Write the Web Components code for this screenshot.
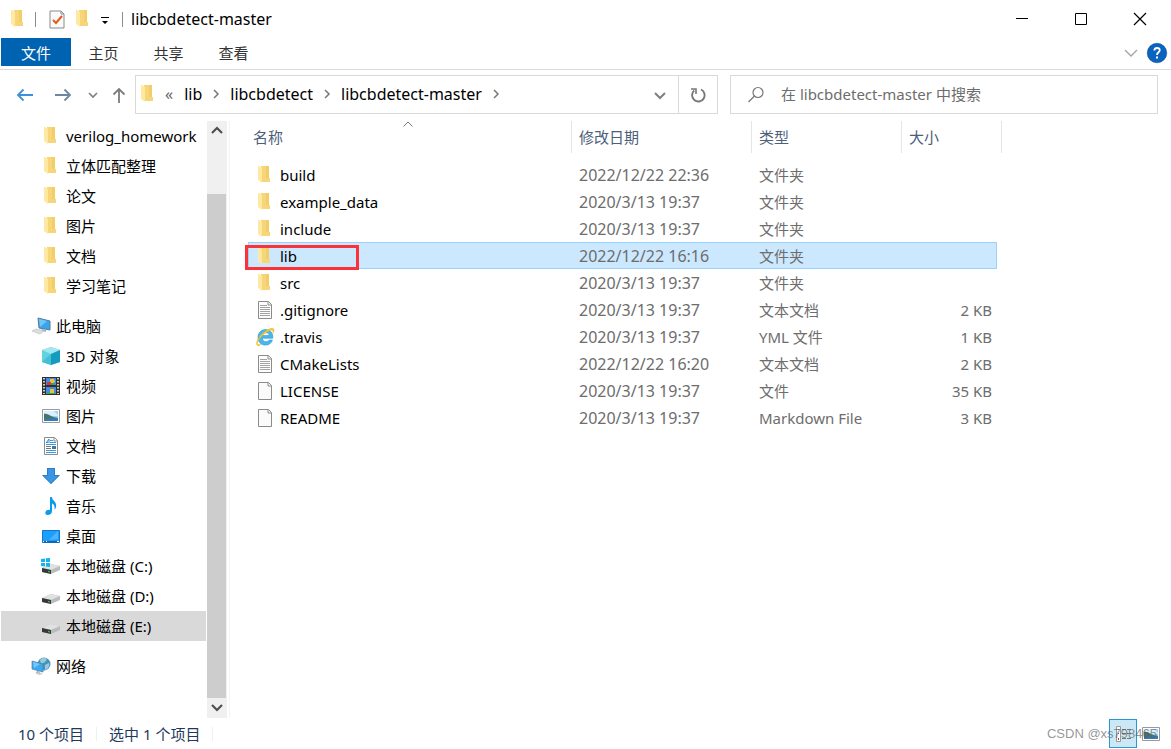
<!DOCTYPE html>
<html lang="zh-CN">
<head>
<meta charset="utf-8">
<title>libcbdetect-master</title>
<style>
  body {
    margin: 0;
    background: #fff;
    color: #000;
    font: 15px/20px "Noto Sans", "Noto Sans CJK SC", sans-serif;
  }
</style>
</head>
<body>
<explorer-window>
  <title-bar slot="top">libcbdetect-master</title-bar>
  <ribbon-tabs slot="top"></ribbon-tabs>
  <address-row slot="top"></address-row>
  <nav-pane slot="side"></nav-pane>
  <file-list></file-list>
  <status-bar slot="bottom"></status-bar>
</explorer-window>

<script>
const ICONS = {
  folder: `<path d="M5 0h8v12h1v4H5z" fill="#f6d678"/><path d="M10 0h3v12h-3z" fill="#f2cd68"/><path d="M2 0h1l3 2v15l-4-3z" fill="#ffe9a2"/>`,
  save: `<path d="M2 1h11l3 3v14H2z" fill="#fafafa" stroke="#8a8a8a"/><path d="M13 1v3h3" fill="none" stroke="#8a8a8a"/><path d="M5 10l3 3 6-7" fill="none" stroke="#e8571c" stroke-width="2"/>`,
  more: `<path d="M5 7h8v1H5z M6 11h6l-3 3z" fill="#000"/>`,
  min: `<path d="M3 8.500h12" stroke="#000"/>`,
  max: `<path d="M3.500 3.500h11v11h-11z" fill="none" stroke="#000"/>`,
  close: `<path d="M3 3l12 12M15 3L3 15" stroke="#000" fill="none" stroke-width="1.200"/>`,
  help: `<circle cx="9" cy="9" r="8.800" fill="#0a63bf" stroke="#0a4e96" stroke-width=".5"/><path d="M6.600 6.800C6.700 5.200 7.600 4.500 9 4.500s2.500.8 2.500 2.100C11.500 8.300 9 8.500 9 10.700" fill="none" stroke="#fff" stroke-width="1.600"/><path d="M8.100 12.200h1.800v1.700H8.100z" fill="#fff"/>`,
  down: `<path d="M4 7l5 5 5-5" fill="none" stroke="#808080" stroke-width="2"/>`,
  downThin: `<path d="M3 6l6 6 6-6" fill="none" stroke="#a3a3a3" stroke-width="1.300"/>`,
  downSmall: `<path d="M5 7l4 4 4-4" fill="none" stroke="#808080" stroke-width="1.700"/>`,
  upScroll: `<path d="M4 11l5-5 5 5" fill="none" stroke="#505050" stroke-width="2.200"/>`,
  downScroll: `<path d="M4 6l5 5 5-5" fill="none" stroke="#505050" stroke-width="2.200"/>`,
  sep: `<path d="M7 5l4 4-4 4" fill="none" stroke="#777" stroke-width="1.500"/>`,
  back: `<path d="M17 9H2M7.500 3.500L2 9l5.500 5.500" fill="none" stroke="#3f8fdd" stroke-width="1.800"/>`,
  forward: `<path d="M1 9h15M10.500 3.500L16 9l-5.500 5.500" fill="none" stroke="#6d87a1" stroke-width="1.800"/>`,
  up: `<path d="M9 17V3M3.500 8.500L9 3l5.500 5.500" fill="none" stroke="#7c7c7c" stroke-width="1.800"/>`,
  refresh: `<path d="M12 3.500A6.300 6.300 0 1 1 5.200 4.500" fill="none" stroke="#777" stroke-width="1.900"/><path d="M2 3h5v5" fill="none" stroke="#777" stroke-width="1.600"/>`,
  search: `<circle cx="11" cy="6.500" r="5" fill="none" stroke="#777" stroke-width="1.200"/><path d="M7.500 10L1.500 16" stroke="#777" stroke-width="1.200"/>`,
  text: `<path d="M2.500.5h10l3 3v14h-13z" fill="#fdfdfd" stroke="#8b8b8b"/><path d="M12 .5V4h3.500" fill="none" stroke="#8b8b8b"/><path d="M4 4.500h7M4 6.500h10M4 8.500h10M4 10.500h10M4 12.500h10M4 14.500h10" stroke="#a2a2a2"/>`,
  blank: `<path d="M2.500.5h10l3 3v14h-13z" fill="#fbfbfb" stroke="#8b8b8b"/><path d="M12 .5V4h3.500" fill="none" stroke="#8b8b8b"/>`,
  ie: `<path d="M16.800 10.200H6.300c.2 2.300 1.700 3.500 3.700 3.500 1.600 0 2.600-.6 3.200-1.600h3.200c-1 3.200-3.500 5-6.800 5-4.500 0-7.600-3.100-7.600-7.600s3.100-7.900 7.600-7.900c4.900 0 7.700 3.500 7.200 8.600zM6.400 7.600h6.800c-.2-2-1.400-3-3.200-3s-3.200 1.100-3.600 3z" fill="#49b9ed" stroke="#2694cf" stroke-width=".6"/><path d="M4 17.500C-1.500 19-.2 12 5.800 6.200 10.500 1.500 16.500-1.200 17.800 1c.6 1.200-.1 3-.7 4 .2-1.800-.2-2.900-1.700-2.700C9.500 3 .2 13 1.600 16c.5 1 2 .6 3.400-.1" fill="#f9c92c" stroke="#e2a81b" stroke-width=".4"/>`,
  pc: `<path d="M6 1l12 3v9L7 11z" fill="#38a5f0" stroke="#567b95"/><path d="M7 2l8 2-7 6z" fill="#73c5fa"/><path d="M10 12l4 1v2l-5-1z" fill="#a9b3bc"/><path d="M0 14l4-2 8 2-4 3z" fill="#dce0e3" stroke="#b4bbc0" stroke-width=".6"/>`,
  cube: `<path d="M0 3l9-3 9 3v12l-9 3-9-3z" fill="#61d2df"/><path d="M0 3l9-3 9 3-9 4z" fill="#a3e8f0"/><path d="M0 15l9-8v11z" fill="#45bfd2"/><path d="M9 7l9-4v12l-9 3z" fill="#159bbd"/>`,
  video: `<path d="M0 0h18v18H0z" fill="#303030"/><path d="M4 1h10v7H4zM4 10h10v7H4z" fill="#4788ea"/><path d="M2 1v16M16 1v16" stroke="#f5f5f5" stroke-width="1.600" stroke-dasharray="1.500 1.500"/><path d="M8 2h4l1 3-2 1H8z" fill="#e6c636"/><path d="M5 5h4v3H5z" fill="#d83a32"/><path d="M9 6h4v2H9zM5 15h8v2H5z" fill="#38a657"/><path d="M8 12h4v4H8z" fill="#e6c636"/>`,
  picture: `<path d="M.5 2.500h17v13H.5z" fill="#fff" stroke="#9a9a9a"/><path d="M2 4h14v10H2z" fill="#9cd2fa"/><path d="M2 4h10l4 4v1H8L2 6z" fill="#d9efff"/><path d="M2 7c4-1 6 3 14 4v2H2z" fill="#45756a"/><path d="M2 12l14-1v3H2z" fill="#347bb8"/>`,
  doc: `<path d="M2.500.5h10l3 3v14h-13z" fill="#fff" stroke="#8b8b8b"/><path d="M12 .5V4h3.500" fill="none" stroke="#8b8b8b"/><path d="M4 5.500h2M8 3.500h3M8 5.500h6M4 7.500h10M4 13.500h10M4 15.500h10" stroke="#3a98dd"/><path d="M4 6l3-4v4" fill="none" stroke="#2489d6"/><path d="M4 9.500h5M4 11.500h5" stroke="#777"/><path d="M10 9h4v3h-4z" fill="#407896"/>`,
  download: `<path d="M5 1h8v7h5l-9 9-9-9h5z" fill="#3b95e5"/><path d="M5.500 1.500h7v7h4.500l-8 8-8-8h4.500z" fill="none" stroke="#2b7dcb"/>`,
  music: `<path d="M8 0h2c0 4 5 4 4 10-.2 1-.7 2-1.500 2.500C13 8.500 11.500 7 10 6.500V14c0 2.500-2 4-4.200 4S3 16.800 3.500 15c.5-1.600 2.500-2.500 4.500-2.100z" fill="#0b9bed"/>`,
  desktop: `<path d="M.5 3.500h17v12H.5z" fill="#1c9eff" stroke="#1377c4"/><path d="M16 4v8L7 13z" fill="#4bb4ff"/><path d="M1 14h16v1.500H1z" fill="#12629f"/><path d="M1 14.500h1M4 14.500h1M15 14.500h2" stroke="#fff"/>`,
  drive: `<path d="M0 11l9-4 9 2v4l-9 4-9-2z" fill="#b9bbbd"/><path d="M0 11l9-4 9 2-9 4z" fill="#dfe1e2"/><path d="M0 11l9 2v4l-9-2z" fill="#353839"/><path d="M6 14l2 .4v1.200L6 15z" fill="#36e04a"/>`,
  system: `<path d="M0 11l9-4 9 2v4l-9 4-9-2z" fill="#b9bbbd"/><path d="M0 11l9-4 9 2-9 4z" fill="#dfe1e2"/><path d="M0 11l9 2v4l-9-2z" fill="#353839"/><path d="M6 14l2 .4v1.200L6 15z" fill="#36e04a"/><path d="M-1 2l4-.5V5h-4zM4 1.300L8 1v4H4zM-1 6h4v3.500L-1 9zM4 6h4v4l-4-.4z" fill="#12b5ed"/>`,
  network: `<circle cx="12" cy="7" r="6.500" fill="#4595be"/><path d="M8 3c2-3 6-2 7-1l-2 3-4 2zM13 8l4-2c1 3-1 6-4 7z" fill="#9bcbd9"/><path d="M0 4l11 3v8L0 12z" fill="#39a9f5" stroke="#517b95" stroke-width=".7"/><path d="M1 5l7 2-6 4z" fill="#75c7ff"/><path d="M5 14l3 1v2l-4-1z" fill="#8b9ba5"/><path d="M3 16l4-1 4 2-4 1z" fill="#c7cdd1"/>`,
  details: `<path d="M2.500 1.500h4v15h-4z" fill="#fff" stroke="#999"/><path d="M4 4h1v1H4zM4 8h1v1H4z" fill="#356db0"/><path d="M4 13h1v2H4z" fill="#c33"/><path d="M8 4.500h4M13 4.500h4M8 8.500h4M13 8.500h4M8 13.500h4M13 13.500h4" stroke="#777"/>`
};

class UiIcon extends HTMLElement {
  connectedCallback() {
    const root = this.attachShadow({ mode: 'open' });
    root.innerHTML = `
      <style>
        :host { display: block; flex: none; width: var(--icon, 18px); height: var(--icon, 18px); }
        svg { display: block; width: 100%; height: 100%; overflow: visible; }
      </style>
      <svg viewBox="0 0 18 18" aria-hidden="true">${ICONS[this.getAttribute('name')]}</svg>`;
  }
}

const BUTTON = `
  button {
    display: flex; align-items: center; justify-content: center;
    margin: 0; padding: 0; border: 0; background: none; color: inherit; font: inherit;
  }
  a { color: inherit; text-decoration: none; }
`;

class ExplorerWindow extends HTMLElement {
  constructor() {
    super();
    this.attachShadow({ mode: 'open' }).innerHTML = `
      <style>
        :host { display: flex; flex-direction: column; min-height: 100vh; }
        main { flex: 1; display: flex; padding-top: 2px; }
        .content { flex: 1; min-width: 0; padding-left: 18px; }
      </style>
      <slot name="top"></slot>
      <main>
        <slot name="side"></slot>
        <div class="content"><slot></slot></div>
      </main>
      <slot name="bottom"></slot>`;
  }
}

class TitleBar extends HTMLElement {
  constructor() {
    super();
    this.attachShadow({ mode: 'open' }).innerHTML = `
      <style>
        ${BUTTON}
        :host { display: flex; align-items: center; height: 38px; padding: 0 2px 0 9px; }
        .tools { display: flex; align-items: center; gap: 8px; }
        .bar { width: 1px; height: 15px; background: #8c8c8c; }
        .save { margin-left: 4px; }
        .more { width: 10px; margin-right: 4px; }
        .title { flex: 1; padding-left: 8px; font-size: 16px; }
        .controls { display: flex; }
        .controls button { width: 59px; height: 38px; }
      </style>
      <div class="tools">
        <ui-icon name="folder"></ui-icon>
        <span class="bar"></span>
        <button class="save" aria-label="属性"><ui-icon name="save"></ui-icon></button>
        <button aria-label="新建文件夹"><ui-icon name="folder"></ui-icon></button>
        <button class="more" aria-label="自定义快速访问工具栏"><ui-icon name="more"></ui-icon></button>
        <span class="bar"></span>
      </div>
      <div class="title"><slot></slot></div>
      <div class="controls">
        <button aria-label="最小化"><ui-icon name="min"></ui-icon></button>
        <button aria-label="最大化"><ui-icon name="max"></ui-icon></button>
        <button aria-label="关闭"><ui-icon name="close"></ui-icon></button>
      </div>`;
  }
}

class RibbonTabs extends HTMLElement {
  constructor() {
    super();
    this.attachShadow({ mode: 'open' }).innerHTML = `
      <style>
        ${BUTTON}
        :host { display: flex; height: 31px; padding: 0 4px 0 1px; border-bottom: 1px solid #dadbdc; color: #333; }
        .tab { width: 65px; height: 30px; }
        .file { width: 70px; height: 28px; padding-top: 1px; background: #0063b1; color: #fff; }
        .right { display: flex; align-items: center; gap: 7px; height: 30px; margin-left: auto; }
        .help { --icon: 20px; }
      </style>
      <button class="tab file">文件</button>
      <button class="tab">主页</button>
      <button class="tab">共享</button>
      <button class="tab">查看</button>
      <div class="right">
        <button aria-label="展开功能区"><ui-icon name="downThin"></ui-icon></button>
        <button aria-label="帮助" class="help"><ui-icon name="help"></ui-icon></button>
      </div>`;
  }
}

class AddressRow extends HTMLElement {
  constructor() {
    super();
    this.attachShadow({ mode: 'open' }).innerHTML = `
      <style>
        ${BUTTON}
        :host { display: flex; height: 39px; padding: 5px 13px 5px 15px; }
        .history { display: flex; align-items: center; width: 120px; }
        .history button { height: 39px; }
        .back { width: 20px; }
        .forward { width: 20px; margin-left: 18px; }
        .recent { width: 20px; margin-left: 10px; }
        .up { width: 20px; margin-left: 6px; }
        .box { display: flex; align-items: center; box-sizing: border-box; height: 39px; border: 1px solid #d9d9d9; }
        .path { flex: 578; padding-left: 3px; }
        .search { flex: 410; margin-left: 12px; padding-left: 16px; gap: 16px; }
        .crumbs { flex: 1; display: flex; align-items: center; gap: 5px; padding-bottom: 2px; font-size: 16px; white-space: nowrap; }
        .crumbs span { padding: 0 6px 0 3px; color: #666; }
        .drop { width: 37px; height: 37px; }
        .refresh { width: 39px; height: 37px; border-left: 1px solid #d9d9d9; }
        input { flex: 1; min-width: 0; padding: 0 0 2px; border: 0; outline: 0; background: none; font: inherit; }
        input::placeholder { color: #6d6d6d; opacity: 1; }
      </style>
      <div class="history">
        <button class="back" aria-label="返回"><ui-icon name="back"></ui-icon></button>
        <button class="forward" aria-label="前进"><ui-icon name="forward"></ui-icon></button>
        <button class="recent" aria-label="最近位置"><ui-icon name="downSmall"></ui-icon></button>
        <button class="up" aria-label="向上"><ui-icon name="up"></ui-icon></button>
      </div>
      <div class="box path">
        <nav class="crumbs">
          <ui-icon name="folder"></ui-icon>
          <span>«</span>
          <a href="#lib">lib</a><ui-icon name="sep"></ui-icon>
          <a href="#libcbdetect">libcbdetect</a><ui-icon name="sep"></ui-icon>
          <a href="#master">libcbdetect-master</a><ui-icon name="sep"></ui-icon>
        </nav>
        <button class="drop" aria-label="上一个位置"><ui-icon name="down"></ui-icon></button>
        <button class="refresh" aria-label="刷新"><ui-icon name="refresh"></ui-icon></button>
      </div>
      <div class="box search">
        <ui-icon name="search"></ui-icon>
        <input type="search" aria-label="搜索" placeholder="在 libcbdetect-master 中搜索">
      </div>`;
  }
}

class NavItem extends HTMLElement {
  connectedCallback() {
    this.attachShadow({ mode: 'open' }).innerHTML = `
      <style>
        ${BUTTON}
        :host { display: block; }
        a { display: flex; align-items: center; gap: 6px; height: 30px; padding-left: 41px; white-space: nowrap; }
        :host([root]) a { padding-left: 31px; }
        :host([root]) { margin-top: 10px; }
        :host([current]) { background: #d9d9d9; }
      </style>
      <a href="#"><ui-icon name="${this.getAttribute('icon')}"></ui-icon><slot></slot></a>`;
  }
}

class NavPane extends HTMLElement {
  constructor() {
    super();
    this.attachShadow({ mode: 'open' }).innerHTML = `
      <style>
        ${BUTTON}
        :host { display: flex; border-right: 1px solid #f3f3f3; }
        nav { width: 205px; padding-left: 1px; }
        .scroll { display: flex; flex-direction: column; width: 20px; margin: 0 2px 0 1px; background: #f0f0f0; }
        .scroll button { width: 19px; height: 20px; }
        .thumb { flex: 1; width: 19px; margin-top: 53px; background: #cdcdcd; }
      </style>
      <nav>
        <nav-item icon="folder">verilog_homework</nav-item>
        <nav-item icon="folder">立体匹配整理</nav-item>
        <nav-item icon="folder">论文</nav-item>
        <nav-item icon="folder">图片</nav-item>
        <nav-item icon="folder">文档</nav-item>
        <nav-item icon="folder">学习笔记</nav-item>
        <nav-item icon="pc" root>此电脑</nav-item>
        <nav-item icon="cube">3D 对象</nav-item>
        <nav-item icon="video">视频</nav-item>
        <nav-item icon="picture">图片</nav-item>
        <nav-item icon="doc">文档</nav-item>
        <nav-item icon="download">下载</nav-item>
        <nav-item icon="music">音乐</nav-item>
        <nav-item icon="desktop">桌面</nav-item>
        <nav-item icon="system">本地磁盘 (C:)</nav-item>
        <nav-item icon="drive">本地磁盘 (D:)</nav-item>
        <nav-item icon="drive" current>本地磁盘 (E:)</nav-item>
        <nav-item icon="network" root>网络</nav-item>
      </nav>
      <div class="scroll">
        <button aria-label="向上滚动"><ui-icon name="upScroll"></ui-icon></button>
        <div class="thumb"></div>
        <button aria-label="向下滚动"><ui-icon name="downScroll"></ui-icon></button>
      </div>`;
  }
}

const FILES = [
  ['folder', 'build', '2022/12/22 22:36', '文件夹', ''],
  ['folder', 'example_data', '2020/3/13 19:37', '文件夹', ''],
  ['folder', 'include', '2020/3/13 19:37', '文件夹', ''],
  ['folder', 'lib', '2022/12/22 16:16', '文件夹', ''],
  ['folder', 'src', '2020/3/13 19:37', '文件夹', ''],
  ['text', '.gitignore', '2020/3/13 19:37', '文本文档', '2 KB'],
  ['ie', '.travis', '2020/3/13 19:37', 'YML 文件', '1 KB'],
  ['text', 'CMakeLists', '2022/12/22 16:20', '文本文档', '2 KB'],
  ['blank', 'LICENSE', '2020/3/13 19:37', '文件', '35 KB'],
  ['blank', 'README', '2020/3/13 19:37', 'Markdown File', '3 KB']
];

class FileList extends HTMLElement {
  constructor() {
    super();
    const rows = FILES.map(([icon, name, date, type, size]) => `
      <tr${name === 'lib' ? ' class="selected"' : ''}>
        <td class="name"><div><ui-icon name="${icon}"></ui-icon>${name}</div></td>
        <td class="date">${date}</td><td>${type}</td><td class="size">${size}</td>
      </tr>`).join('');
    this.attachShadow({ mode: 'open' }).innerHTML = `
      <style>
        :host { display: block; }
        table { width: 754px; table-layout: fixed; border-collapse: collapse; color: #6d6d6d; }
        th { padding: 0 0 8px; color: #4c607a; font-weight: 400; text-align: left; }
        th div { position: relative; height: 20px; padding: 6px 0 6px 7px; border-right: 1px solid #e5e5e5; }
        th:first-child div { padding-left: 5px; }
        .sort { position: absolute; left: 155px; top: 0; width: 10px; height: 6px; }
        td { height: 27px; padding: 0 0 0 7px; white-space: nowrap; }
        .name { position: relative; padding-left: 8px; color: #000; }
        .name div { display: flex; align-items: center; gap: 6px; }
        .date { font-size: 16px; }
        td.size { padding: 0 5px 0 0; text-align: right; }
        .selected td { background: #cce8ff; box-shadow: inset 0 1px #99d1ff, inset 0 -1px #99d1ff; }
        .selected td.name { box-shadow: inset 0 1px #99d1ff, inset 0 -1px #99d1ff, inset 1px 0 #99d1ff; }
        .selected td.size { box-shadow: inset 0 1px #99d1ff, inset 0 -1px #99d1ff, inset -1px 0 #99d1ff; }
        /* red marker drawn over the selected folder */
        .selected .name::after {
          content: ""; position: absolute; left: -3px; top: 3px;
          box-sizing: border-box; width: 114px; height: 25px; border: 3px solid #f93338;
        }
      </style>
      <table>
        <colgroup><col><col style="width: 180px"><col style="width: 150px"><col style="width: 95px"><col style="width: 5px"></colgroup>
        <thead>
          <tr>
            <th><div>名称<svg class="sort" viewBox="0 0 10 6"><path d="M.5 5.500L5 1l4.500 4.500" fill="none" stroke="#777"/></svg></div></th>
            <th><div>修改日期</div></th>
            <th><div>类型</div></th>
            <th colspan="2"><div>大小</div></th>
          </tr>
        </thead>
        <tbody>${rows}</tbody>
      </table>`;
  }
}

class StatusBar extends HTMLElement {
  constructor() {
    super();
    this.attachShadow({ mode: 'open' }).innerHTML = `
      <style>
        ${BUTTON}
        :host { display: flex; align-items: center; position: relative; height: 31px; padding: 0 11px 0 18px; color: #1e395b; }
        .part { padding-right: 12px; margin-right: 12px; border-right: 1px solid #f0f0f0; line-height: 14px; }
        .views { display: flex; align-items: center; gap: 5px; margin-left: auto; }
        .on { box-sizing: border-box; width: 28px; height: 29px; border: 1px solid #2a98d5; background: #cbe8f6; }
        .mark { position: absolute; right: 14px; top: 6px; color: rgba(90, 90, 90, .65); font: 13px/20px "Liberation Sans", sans-serif; }
      </style>
      <span class="part">10 个项目</span>
      <span class="part">选中 1 个项目</span>
      <div class="views">
        <button class="on" aria-label="详细信息"><ui-icon name="details"></ui-icon></button>
        <button aria-label="大缩略图"><ui-icon name="picture"></ui-icon></button>
      </div>
      <span class="mark">CSDN @xs798465</span>`;
  }
}

customElements.define('ui-icon', UiIcon);
customElements.define('nav-item', NavItem);
customElements.define('title-bar', TitleBar);
customElements.define('ribbon-tabs', RibbonTabs);
customElements.define('address-row', AddressRow);
customElements.define('nav-pane', NavPane);
customElements.define('file-list', FileList);
customElements.define('status-bar', StatusBar);
customElements.define('explorer-window', ExplorerWindow);
</script>
</body>
</html>
